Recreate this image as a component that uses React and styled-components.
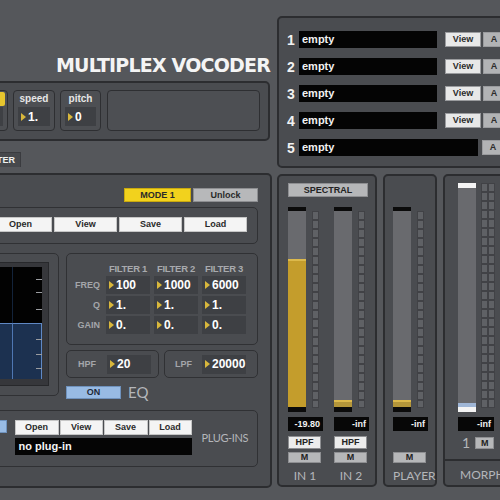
import React from "react";
import styled, { createGlobalStyle } from "styled-components";

const GlobalStyle = createGlobalStyle`
  html, body {
    margin: 0;
    padding: 0;
    background: #55575b;
  }
  body {
    font-family: "Liberation Sans", Arial, sans-serif;
  }
`;

const Screen = styled.div`
  width: 500px;
  height: 500px;
  overflow: hidden;
  background: #55575b;
  display: flex;
  align-items: flex-start;
`;

const LeftColumn = styled.div`
  flex: none;
  width: 294px;
  margin-left: -22px;
  display: flex;
  flex-direction: column;
`;

const RightColumn = styled.div`
  flex: none;
  width: 250px;
  margin-left: 5px;
  display: flex;
  flex-direction: column;
`;

const TitleBar = styled.div`
  height: 81px;
  display: flex;
  align-items: flex-end;
  justify-content: flex-end;
  padding-right: 2px;
  box-sizing: border-box;
`;

const Title = styled.h1`
  margin: 0 0 6px;
  font-family: "DejaVu Sans", sans-serif;
  font-weight: bold;
  font-size: 19px;
  letter-spacing: -0.8px;
  color: #f4f4f4;
  line-height: 1;
`;

const Panel = styled.div`
  box-sizing: border-box;
  background: #4a4c50;
  border: 2px solid #2c2d30;
  border-radius: 5px;
`;

const TopPanel = styled(Panel)`
  height: 60px;
  margin-right: 2px;
  display: flex;
  justify-content: flex-end;
  align-items: flex-start;
  gap: 5px;
  padding: 7px 8px 0 0;
`;

const ParamBox = styled.div`
  box-sizing: border-box;
  flex: none;
  width: ${(p) => p.$w}px;
  height: 41px;
  background: #4d4f53;
  border: 1px solid #2e2f32;
  border-radius: 4px;
  display: flex;
  flex-direction: column;
  align-items: center;
  padding: 0 4px;
`;

const ParamLabel = styled.div`
  height: 16px;
  line-height: 16px;
  font-size: 10px;
  font-weight: bold;
  color: #e6e6e6;
`;

const ParamHeader = styled.div`
  height: 14px;
  width: calc(100% + 4px);
  margin: 1px 0 1px;
  background: #e6c52e;
  border-radius: 2px;
`;

const Display = styled.div`
  box-sizing: border-box;
  flex: none;
  width: 153px;
  height: 41px;
  margin-left: 1px;
  background: #4d4f53;
  border: 1px solid #2e2f32;
  border-radius: 4px;
`;

const FieldBox = styled.div`
  box-sizing: border-box;
  flex: none;
  width: ${(p) => p.$w}px;
  height: ${(p) => p.$h || 19}px;
  background: #3e4044;
  display: flex;
  align-items: center;
  gap: 2px;
  padding-left: 3px;
  color: #ffffff;
  font-size: 12px;
  font-weight: bold;
`;

const Arrow = styled.span`
  width: 0;
  height: 0;
  border-top: 4px solid transparent;
  border-bottom: 4px solid transparent;
  border-left: 5px solid #d8b73c;
`;

const Field = ({ value, w, h }) => (
  <FieldBox $w={w} $h={h}>
    <Arrow />
    {value}
  </FieldBox>
);

const TabRow = styled.div`
  display: flex;
  margin-top: 11px;
`;

const Tab = styled.div`
  box-sizing: border-box;
  width: 43px;
  height: 15px;
  background: #46484c;
  border: 1px solid #3a3b3f;
  border-bottom: none;
  color: #f0f0f0;
  font-size: 9px;
  font-weight: bold;
  text-align: right;
  padding-right: 5px;
  line-height: 15px;
`;

const MainPanel = styled(Panel)`
  margin-top: 6px;
  height: 315px;
  padding: 13px 12px 0 0;
  display: flex;
  flex-direction: column;
`;

const ModeRow = styled.div`
  display: flex;
  justify-content: flex-end;
  gap: 2px;
  height: 14px;
`;

const ModeButton = styled.div`
  box-sizing: border-box;
  width: ${(p) => p.$w}px;
  height: 14px;
  background: ${(p) => (p.$active ? "#f2d21d" : "#b7b8ba")};
  border: 1px solid ${(p) => (p.$active ? "#c9a90f" : "#8d8e91")};
  color: #2a2a2a;
  font-size: 9px;
  font-weight: bold;
  text-align: center;
  line-height: 12px;
`;

const SubPanel = styled.div`
  box-sizing: border-box;
  background: #4a4c50;
  border: 1.5px solid #303134;
  border-radius: 5px;
`;

const FilePanel = styled(SubPanel)`
  margin-top: 5px;
  height: 37px;
  display: flex;
  justify-content: flex-end;
  align-items: flex-start;
  gap: 2px;
  padding: 9px 10px 0 0;
`;

const WhiteButton = styled.div`
  box-sizing: border-box;
  flex: none;
  width: ${(p) => p.$w}px;
  height: ${(p) => p.$h || 15}px;
  background: #f4f4f4;
  border: 1px solid #c6c6c6;
  color: #2a2a2a;
  font-size: 9px;
  font-weight: bold;
  text-align: center;
  line-height: ${(p) => (p.$h || 15) - 2}px;
`;

const MidRow = styled.div`
  margin-top: 9px;
  display: flex;
  gap: 7px;
`;

const GraphBox = styled(SubPanel)`
  flex: 1;
  min-width: 0;
  height: 143px;
  padding: 8px 9px 9px 0;
`;

const GraphFrame = styled.div`
  box-sizing: border-box;
  height: 100%;
  background: #36373b;
  border: 1px solid #27282b;
  padding: 4px 6px 4px 5px;
`;

const FilterColumn = styled.div`
  flex: none;
  width: 192px;
  display: flex;
  flex-direction: column;
`;

const FilterPanel = styled(SubPanel)`
  height: 92px;
  padding: 8px 11px 0 4px;
  display: grid;
  grid-template-columns: 1fr 44px 44px 44px;
  grid-template-rows: 12px 18px 18px 18px;
  column-gap: 4px;
  row-gap: 2px;
  align-items: center;
`;

const FilterHead = styled.div`
  color: #a8aaae;
  font-size: 9.5px;
  font-weight: bold;
  text-align: center;
  white-space: nowrap;
  letter-spacing: -0.3px;
`;

const RowLabel = styled.div`
  color: #a4a6aa;
  font-size: 9px;
  font-weight: bold;
  text-align: right;
  padding-right: 2px;
`;

const PassRow = styled.div`
  display: flex;
  gap: 5px;
  margin-top: 5px;
`;

const PassPanel = styled(SubPanel)`
  width: ${(p) => p.$w}px;
  height: 28px;
  display: flex;
  align-items: center;
  padding-right: ${(p) => p.$pad}px;
`;

const PassLabel = styled.div`
  flex: 1;
  text-align: center;
  color: #a4a6aa;
  font-size: 9px;
  font-weight: bold;
`;

const EqRow = styled.div`
  margin-top: 5px;
  display: flex;
  align-items: center;
  gap: 7px;
`;

const BlueButton = styled.div`
  box-sizing: border-box;
  flex: none;
  width: ${(p) => p.$w}px;
  height: ${(p) => p.$h}px;
  background: #98bbe4;
  border: 1px solid #6f92bd;
  color: #1f2a38;
  font-size: 9px;
  font-weight: bold;
  text-align: center;
  line-height: ${(p) => p.$h - 2}px;
`;

const SectionText = styled.div`
  font-family: "Lato", "Open Sans", sans-serif;
  font-size: ${(p) => p.$size || 12}px;
  color: #b4b6ba;
  white-space: nowrap;
`;

const PluginPanel = styled(SubPanel)`
  margin-top: 9px;
  height: 57px;
  display: flex;
  justify-content: flex-end;
  align-items: flex-start;
  padding: 9px 9px 0 0;
`;

const PluginBlock = styled.div`
  flex: none;
  width: 177px;
  margin-left: 8px;
  display: flex;
  flex-direction: column;
  gap: 3px;
`;

const PluginButtons = styled.div`
  display: flex;
  gap: 1px;
`;

const PluginName = styled.div`
  height: 17px;
  background: #050505;
  color: #f4f4f4;
  font-size: 11px;
  font-weight: bold;
  padding-left: 4px;
  line-height: 17px;
`;

const PluginLabel = styled(SectionText)`
  margin: 11px 0 0 10px;
  font-size: 11px;
  letter-spacing: -0.4px;
`;

/* right side */

const SlotPanel = styled(Panel)`
  margin-top: 16px;
  height: 152px;
  padding: 13px 0 0 8px;
  display: flex;
  flex-direction: column;
  gap: 10px;
`;

const SlotRow = styled.div`
  display: flex;
  align-items: center;
  height: 17px;
`;

const SlotNum = styled.div`
  width: 12px;
  color: #f2f2f2;
  font-size: 14px;
  font-weight: bold;
`;

const SlotName = styled.div`
  box-sizing: border-box;
  width: ${(p) => p.$w}px;
  height: 17px;
  background: #040404;
  color: #f2f2f2;
  font-size: 11px;
  font-weight: bold;
  padding-left: 3px;
  line-height: 16px;
`;

const SlotButton = styled.div`
  box-sizing: border-box;
  width: ${(p) => p.$w}px;
  height: 15px;
  margin-left: ${(p) => p.$ml}px;
  background: ${(p) => (p.$dark ? "#b2b3b5" : "#e8e8e8")};
  border: 1px solid #9a9b9e;
  color: #2c2c2c;
  font-size: 9px;
  font-weight: bold;
  text-align: center;
  line-height: 13px;
`;

const MeterRow = styled.div`
  margin-top: 6px;
  display: flex;
  gap: 6px;
`;

const MeterPanel = styled(Panel)`
  width: ${(p) => p.$w}px;
  height: 313px;
  display: flex;
  flex-direction: column;
  padding: 7px 0 0 ${(p) => p.$pl}px;
`;

const GreyButton = styled.div`
  box-sizing: border-box;
  width: ${(p) => p.$w}px;
  height: ${(p) => p.$h}px;
  background: ${(p) => (p.$light ? "#ececec" : "#b6b7b9")};
  border: 1px solid #8e8f92;
  color: #222;
  font-size: 9px;
  font-weight: bold;
  text-align: center;
  line-height: ${(p) => p.$h - 2}px;
`;

const Strips = styled.div`
  margin-top: 10px;
  display: flex;
  gap: 10px;
`;

const Strip = styled.div`
  width: 36px;
  display: flex;
  flex-direction: column;
  align-items: flex-start;
`;

const MeterPair = styled.div`
  display: flex;
  gap: 6px;
`;

const MeterBar = styled.div`
  box-sizing: border-box;
  width: 18px;
  height: 205px;
  border-top: 4px solid ${(p) => p.$top || "#0b0b0b"};
  border-bottom: 5px solid ${(p) => p.$bottom || "#0b0b0b"};
  background: #696a6e;
  display: flex;
  flex-direction: column;
  justify-content: flex-end;
`;

const MeterFill = styled.div`
  background: #c49d2c;
  border-top: 2px solid #dcb94c;
`;

const Scale = styled.div`
  box-sizing: border-box;
  width: 7px;
  height: ${(p) => p.$h || 197}px;
  margin-top: ${(p) => p.$mt ?? 4}px;
  border: 1px solid #414246;
  background: repeating-linear-gradient(
    to bottom,
    #5f6165 0 7px,
    #414246 7px 9px
  );
`;

const ValueBox = styled.div`
  box-sizing: border-box;
  width: ${(p) => p.$w || 35}px;
  height: 14px;
  margin-top: 5px;
  background: #070707;
  color: #f2f2f2;
  font-size: 9px;
  font-weight: bold;
  text-align: right;
  padding-right: 3px;
  line-height: 14px;
`;

const StripButtons = styled.div`
  margin-top: 5px;
  display: flex;
  flex-direction: column;
  gap: 3px;
`;

const Spacer = styled.div`
  height: ${(p) => p.$h}px;
`;

const StripLabel = styled(SectionText)`
  margin-top: 5px;
  width: 34px;
  text-align: center;
  font-size: 12px;
`;

const MorphLine = styled.div`
  display: flex;
  align-items: center;
  gap: 5px;
  margin-top: 3px;
  padding-left: 4px;
`;

const MorphFoot = styled.div`
  margin: 8px 0 0 -13px;
  border-top: 2px solid #2c2d30;
  padding: 6px 0 0 15px;
`;

function Graph() {
  const ticks = [12, 25, 42, 72, 87, 101];
  return (
    <svg width="55" height="112" style={{ display: "block" }}>
      <rect x="0" y="0" width="55" height="112" fill="#020202" />
      <rect x="0" y="56" width="55" height="56" fill="#1c3150" />
      <line x1="0" y1="56.5" x2="55" y2="56.5" stroke="#5f88c4" />
      <line x1="54.5" y1="56" x2="54.5" y2="112" stroke="#5f88c4" />
      <line x1="25.5" y1="0" x2="25.5" y2="56" stroke="#13233a" />
      <line x1="25.5" y1="56" x2="25.5" y2="112" stroke="#4f77b2" />
      {ticks.map((y) => (
        <line key={y} x1="49" y1={y + 0.5} x2="55" y2={y + 0.5} stroke="#9a9ca0" />
      ))}
    </svg>
  );
}

function ChannelStrip({ fill, value, hpf, label, fillTone }) {
  return (
    <Strip>
      <MeterPair>
        <MeterBar>
          <MeterFill style={{ height: fill, background: fillTone }} />
        </MeterBar>
        <Scale />
      </MeterPair>
      <ValueBox>{value}</ValueBox>
      <StripButtons>
        {hpf ? <GreyButton $w={33} $h={13} $light>HPF</GreyButton> : <Spacer $h={13} />}
        <GreyButton $w={33} $h={11}>M</GreyButton>
      </StripButtons>
      <StripLabel>{label}</StripLabel>
    </Strip>
  );
}

const slots = [1, 2, 3, 4];

export default function App() {
  return (
    <>
      <GlobalStyle />
      <Screen>
        <LeftColumn>
          <TitleBar>
            <Title>MULTIPLEX VOCODER</Title>
          </TitleBar>

          <TopPanel>
            <ParamBox $w={42}>
              <ParamHeader />
              <Field value="1." w={32} />
            </ParamBox>
            <ParamBox $w={42}>
              <ParamLabel>speed</ParamLabel>
              <Field value="1." w={32} />
            </ParamBox>
            <ParamBox $w={41}>
              <ParamLabel>pitch</ParamLabel>
              <Field value="0" w={31} />
            </ParamBox>
            <Display />
          </TopPanel>

          <TabRow>
            <Tab>FILTER</Tab>
          </TabRow>

          <MainPanel>
            <ModeRow>
              <ModeButton $w={67} $active>MODE 1</ModeButton>
              <ModeButton $w={65}>Unlock</ModeButton>
            </ModeRow>

            <FilePanel>
              <WhiteButton $w={63}>Open</WhiteButton>
              <WhiteButton $w={63}>View</WhiteButton>
              <WhiteButton $w={63}>Save</WhiteButton>
              <WhiteButton $w={63}>Load</WhiteButton>
            </FilePanel>

            <MidRow>
              <GraphBox>
                <GraphFrame>
                  <Graph />
                </GraphFrame>
              </GraphBox>
              <FilterColumn>
                <FilterPanel>
                  <span />
                  <FilterHead>FILTER 1</FilterHead>
                  <FilterHead>FILTER 2</FilterHead>
                  <FilterHead>FILTER 3</FilterHead>
                  <RowLabel>FREQ</RowLabel>
                  <Field value="100" w={44} h={18} />
                  <Field value="1000" w={44} h={18} />
                  <Field value="6000" w={44} h={18} />
                  <RowLabel>Q</RowLabel>
                  <Field value="1." w={44} h={18} />
                  <Field value="1." w={44} h={18} />
                  <Field value="1." w={44} h={18} />
                  <RowLabel>GAIN</RowLabel>
                  <Field value="0." w={44} h={18} />
                  <Field value="0." w={44} h={18} />
                  <Field value="0." w={44} h={18} />
                </FilterPanel>
                <PassRow>
                  <PassPanel $w={93} $pad={7}>
                    <PassLabel>HPF</PassLabel>
                    <Field value="20" w={44} />
                  </PassPanel>
                  <PassPanel $w={94} $pad={11}>
                    <PassLabel>LPF</PassLabel>
                    <Field value="20000" w={44} />
                  </PassPanel>
                </PassRow>
                <EqRow>
                  <BlueButton $w={55} $h={13}>ON</BlueButton>
                  <SectionText $size={15}>EQ</SectionText>
                </EqRow>
              </FilterColumn>
            </MidRow>

            <PluginPanel>
              <BlueButton $w={40} $h={13}>ON</BlueButton>
              <PluginBlock>
                <PluginButtons>
                  <WhiteButton $w={44}>Open</WhiteButton>
                  <WhiteButton $w={43}>View</WhiteButton>
                  <WhiteButton $w={44}>Save</WhiteButton>
                  <WhiteButton $w={43}>Load</WhiteButton>
                </PluginButtons>
                <PluginName>no plug-in</PluginName>
              </PluginBlock>
              <PluginLabel>PLUG-INS</PluginLabel>
            </PluginPanel>
          </MainPanel>
        </LeftColumn>

        <RightColumn>
          <SlotPanel>
            {slots.map((n) => (
              <SlotRow key={n}>
                <SlotNum>{n}</SlotNum>
                <SlotName $w={138}>empty</SlotName>
                <SlotButton $w={36} $ml={8}>View</SlotButton>
                <SlotButton $w={22} $ml={2} $dark>A</SlotButton>
              </SlotRow>
            ))}
            <SlotRow>
              <SlotNum>5</SlotNum>
              <SlotName $w={179}>empty</SlotName>
              <SlotButton $w={22} $ml={4} $dark>A</SlotButton>
            </SlotRow>
          </SlotPanel>

          <MeterRow>
            <MeterPanel $w={100} $pl={9}>
              <GreyButton $w={80} $h={14}>SPECTRAL</GreyButton>
              <Strips>
                <ChannelStrip fill={146} value="-19.80" hpf label="IN 1" />
                <ChannelStrip fill={5} value="-inf" hpf label="IN 2" fillTone="#b4963a" />
              </Strips>
            </MeterPanel>

            <MeterPanel $w={54} $pl={8}>
              <Spacer $h={14} />
              <Strips>
                <ChannelStrip fill={5} value="-inf" label="PLAYER" fillTone="#b4963a" />
              </Strips>
            </MeterPanel>

            <MeterPanel $w={80} $pl={13}>
              <MeterPair>
                <MeterBar $top="#f4f4f4" $bottom="#f4f4f4" style={{ height: 229, borderTopWidth: 5 }}>
                  <MeterFill style={{ height: 4, background: "#9fb6d6", borderTop: "none" }} />
                </MeterBar>
                <Scale $mt={0} $h={225} style={{ marginLeft: -1 }} />
                <Scale $mt={0} $h={225} style={{ marginLeft: -6 }} />
              </MeterPair>
              <ValueBox $w={36}>-inf</ValueBox>
              <MorphLine>
                <SectionText $size={14}>1</SectionText>
                <GreyButton $w={19} $h={12}>M</GreyButton>
              </MorphLine>
              <MorphFoot>
                <SectionText>MORPH</SectionText>
              </MorphFoot>
            </MeterPanel>
          </MeterRow>
        </RightColumn>
      </Screen>
    </>
  );
}
